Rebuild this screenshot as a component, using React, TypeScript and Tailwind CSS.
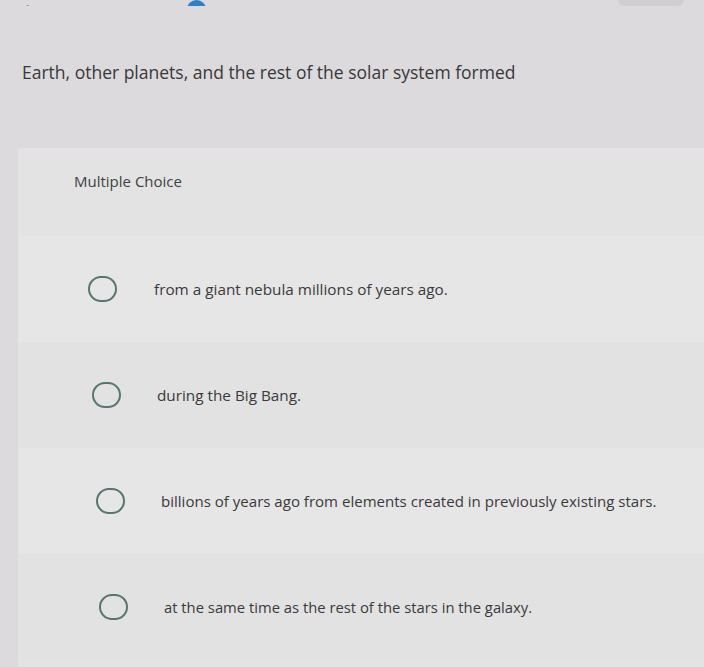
import React from "react";

const options = [
  { text: "from a giant nebula millions of years ago.", pl: "pl-[70px]", gap: "gap-[37px]", size: "text-[15.3px]" },
  { text: "during the Big Bang.", pl: "pl-[74px]", gap: "gap-[36px]", size: "text-[15.3px]" },
  { text: "billions of years ago from elements created in previously existing stars.", pl: "pl-[78px]", gap: "gap-[36px]", size: "text-[15.05px]" },
  { text: "at the same time as the rest of the stars in the galaxy.", pl: "pl-[81px]", gap: "gap-[36px]", size: "text-[14.8px]" },
];

export default function App() {
  return (
    <div
      className="w-[704px] h-[667px] overflow-hidden bg-[#dcdadc] text-[#3b3b3d] flex flex-col"
      style={{ fontFamily: "'Open Sans', Lato, sans-serif" }}
    >
      {/* clipped header strip */}
      <div className="h-[6px] overflow-hidden flex items-end pl-[10px] pr-[20px]">
        <span className="text-[15px] leading-[16px] text-[#6f6f71] -mb-[12px] tracking-[1px]">(Chapter 1</span>
        <span className="ml-[94px] w-[19px] h-[19px] rounded-full bg-[#2f7fc4] -mb-[13px]" />
        <span className="ml-auto w-[66px] h-[8px] rounded-b-md bg-[#d0ced0]" />
      </div>
      <div className="h-[54px]" />
      <div className="pl-[22px] text-[17.5px] leading-[24px] text-[#38383a]">
        Earth, other planets, and the rest of the solar system formed
      </div>
      <div className="h-[64px]" />
      <div className="ml-[18px] flex-1 bg-[#e3e3e3] flex flex-col">
        <div className="pt-[23px] pl-[56px] text-[15px] leading-[20px] text-[#3f3f41]">Multiple Choice</div>
        <div className="h-[45px]" />
        <div className="flex flex-col">
          {options.map((o, i) => (
            <div
              key={i}
              className={`h-[106px] flex items-center ${o.pl} ${o.gap} ${i % 2 === 0 ? "bg-[#e6e6e6]" : "bg-[#e2e2e2]"}`}
            >
              <span className="w-[29px] h-[26px] rounded-full border-2 border-[#56766f] shrink-0" />
              <span className={`${o.size} leading-[20px] text-[#3a3a3c]`}>{o.text}</span>
            </div>
          ))}
        </div>
      </div>
    </div>
  );
}
